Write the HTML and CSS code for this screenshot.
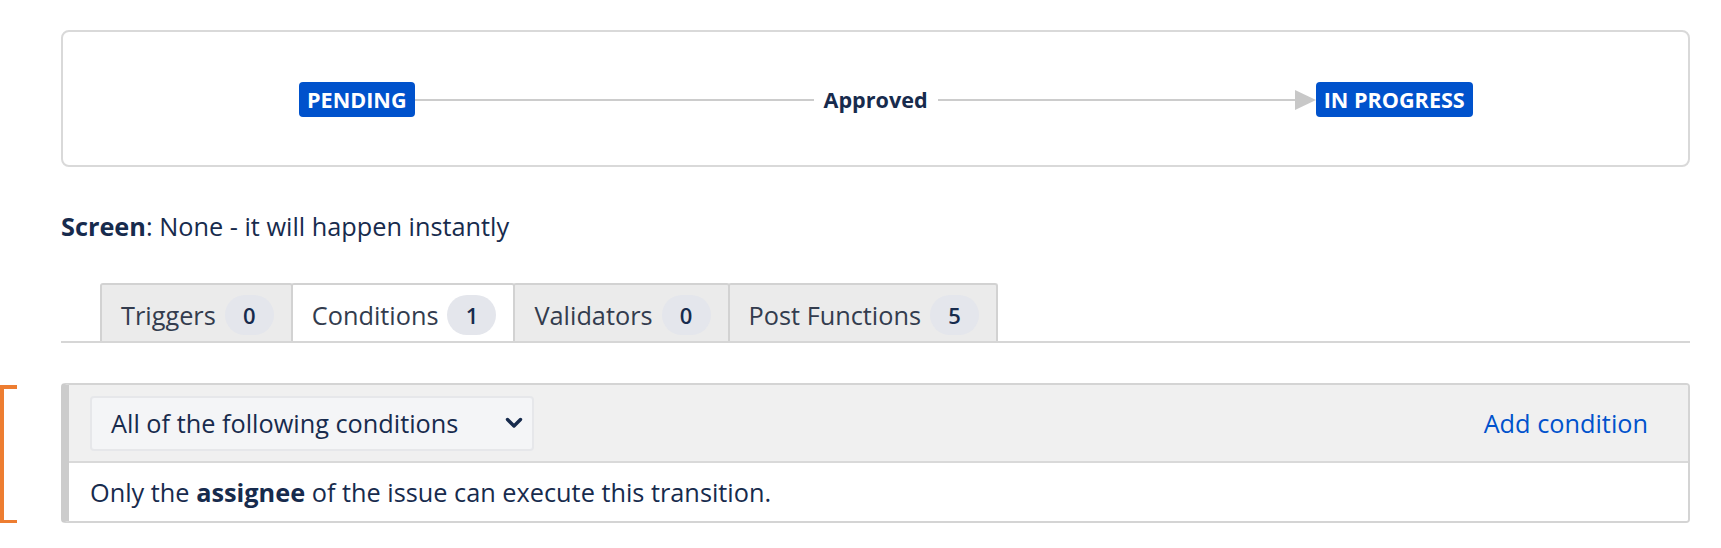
FILE: index.html
```html
<!DOCTYPE html>
<html lang="en">
<head>
<meta charset="utf-8">
<title>Transition</title>
<link rel="stylesheet" href="styles.css">
</head>
<body>
<div class="page">
  <div class="diagram">
    <div class="flow">
      <span class="lozenge">PENDING</span>
      <span class="line line-left"></span>
      <span class="transition-name">Approved</span>
      <span class="line line-right"></span>
      <svg class="arrowhead" width="21" height="20" viewBox="0 0 21 20"><polygon points="0,0 21,10 0,20" fill="#c8c8c8"/></svg>
      <span class="lozenge">IN PROGRESS</span>
    </div>
  </div>

  <p class="screen"><strong>Screen</strong>: None - it will happen instantly</p>

  <div class="tabs">
    <div class="tab"><span class="tab-label">Triggers</span><span class="count">0</span></div>
    <div class="tab active"><span class="tab-label">Conditions</span><span class="count">1</span></div>
    <div class="tab"><span class="tab-label">Validators</span><span class="count">0</span></div>
    <div class="tab"><span class="tab-label">Post Functions</span><span class="count">5</span></div>
  </div>

  <div class="conditions">
    <span class="bracket"></span>
    <div class="panel">
      <div class="panel-head">
        <div class="select">
          <span>All of the following conditions</span>
          <svg class="chevron" width="18" height="12" viewBox="0 0 18 12"><path d="M2.5 2.5 L9 9 L15.5 2.5" fill="none" stroke="#172b4d" stroke-width="3.4" stroke-linecap="round" stroke-linejoin="round"/></svg>
        </div>
        <a class="add-link" href="#">Add condition</a>
      </div>
      <div class="panel-body"><p class="condition-text">Only the <strong>assignee</strong> of the issue can execute this transition.</p></div>
    </div>
  </div>
</div>
</body>
</html>
```

FILE: styles.css
```css
html, body {
  margin: 0;
  padding: 0;
  background: #ffffff;
}

body {
  font-family: "Open Sans", "Noto Sans", "Liberation Sans", sans-serif;
  font-size: 25.3px;
  color: #172b4d;
}

.page {
  width: 1629px;
  padding: 30px 0 0 61px;
}

.diagram {
  box-sizing: border-box;
  height: 137px;
  border: 2px solid #d9d9d9;
  border-radius: 8px;
  display: flex;
  align-items: center;
  padding-left: 236px;
  padding-top: 2px;
}

.flow {
  display: flex;
  align-items: center;
}

.lozenge {
  display: inline-block;
  height: 35px;
  line-height: 35px;
  padding: 0 8px;
  background: #0052cc;
  color: #ffffff;
  font-weight: 700;
  font-size: 21.6px;
  border-radius: 4px;
}

.line {
  height: 2px;
  background: #cccccc;
}

.line-left {
  width: 399px;
}

.line-right {
  width: 357px;
}

.transition-name {
  font-weight: 700;
  font-size: 21.6px;
  padding: 0 10px;
}

.arrowhead {
  display: block;
}

.screen {
  margin: 42px 0 0 0;
  line-height: 34px;
}

.tabs {
  margin-top: 40px;
  display: flex;
  padding-left: 39px;
  border-bottom: 2px solid #d6d6d6;
}

.tab {
  box-sizing: border-box;
  height: 58px;
  display: flex;
  align-items: center;
  padding: 4px 17px 0 19px;
  background: #ebebeb;
  border: 2px solid #d2d2d2;
  border-bottom: none;
  border-radius: 3px 3px 0 0;
  margin-left: -2px;
  color: #333c4e;
}

.tab:first-child {
  margin-left: 0;
}

.tab.active {
  background: #ffffff;
}

.count {
  display: inline-block;
  margin-left: 9px;
  width: 49px;
  height: 40px;
  line-height: 40px;
  text-align: center;
  border-radius: 20px;
  background: #e4e6ec;
  color: #172b4d;
  font-weight: 600;
  font-size: 22px;
}

.conditions {
  position: relative;
  margin-top: 40px;
}

.bracket {
  position: absolute;
  left: -61px;
  top: 2px;
  width: 13px;
  height: 131px;
  border: 4px solid #ed7d31;
  border-right: none;
}

.panel {
  border: 2px solid #d4d4d4;
  border-left: 8px solid #cccccc;
  border-radius: 4px;
  overflow: hidden;
}

.panel-head {
  box-sizing: border-box;
  height: 78px;
  background: #f0f0f0;
  border-bottom: 2px solid #d9d9d9;
  display: flex;
  align-items: center;
  justify-content: space-between;
  padding: 0 40px 0 21px;
}

.select {
  box-sizing: border-box;
  width: 444px;
  height: 55px;
  background: #f4f5f7;
  border: 2px solid #e6e7ea;
  border-radius: 4px;
  display: flex;
  align-items: center;
  justify-content: space-between;
  padding: 0 9px 0 19px;
}

.chevron {
  display: block;
}

.add-link {
  color: #0052cc;
  text-decoration: none;
}

.panel-body {
  box-sizing: border-box;
  height: 58px;
  display: flex;
  align-items: center;
  padding-left: 21px;
  background: #ffffff;
}

.condition-text {
  margin: 0;
}
```
